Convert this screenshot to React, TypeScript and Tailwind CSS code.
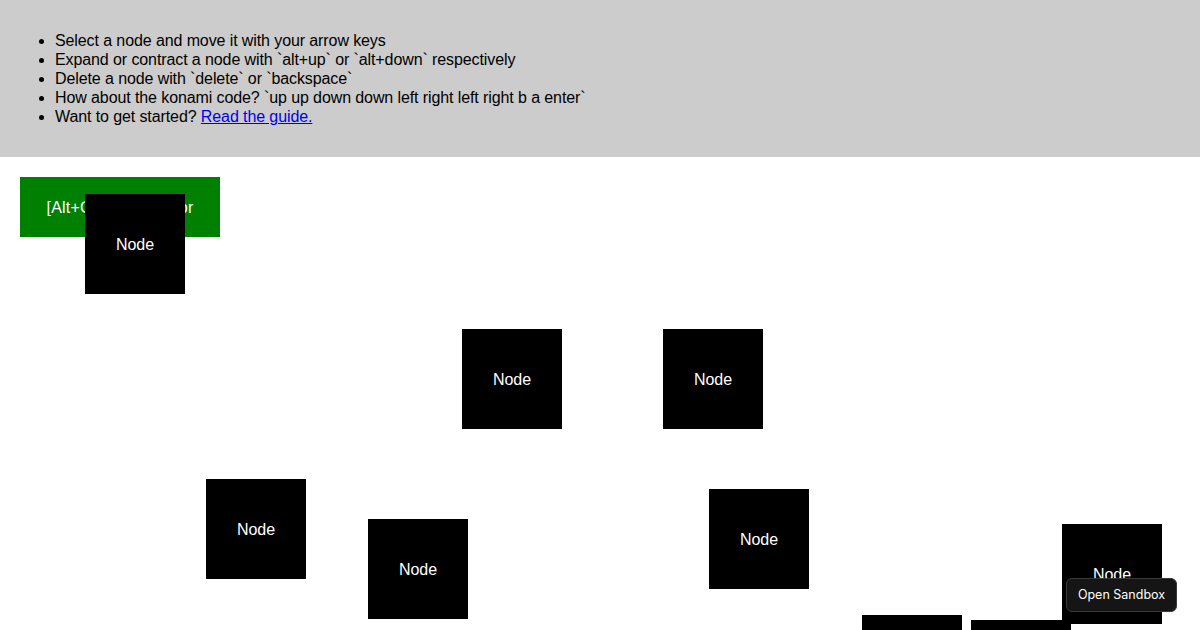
const nodes = [
  { x: 85, y: 194 },
  { x: 462, y: 329 },
  { x: 663, y: 329 },
  { x: 206, y: 479 },
  { x: 368, y: 519 },
  { x: 709, y: 489 },
  { x: 1062, y: 524 },
  { x: 862, y: 615 },
  { x: 971, y: 620 },
]

export default function App() {
  return (
    <div
      className="relative h-[630px] w-[1200px] overflow-hidden bg-white text-black"
      style={{ fontFamily: '"Liberation Sans", Arial, sans-serif' }}
    >
      <header className="bg-[#cccccc] p-[15px]">
        <ul className="my-4 list-disc pl-10 text-base leading-[19px] tracking-[-0.1px]">
          <li>Select a node and move it with your arrow keys</li>
          <li>Expand or contract a node with `alt+up` or `alt+down` respectively</li>
          <li>Delete a node with `delete` or `backspace`</li>
          <li>How about the konami code? `up up down down left right left right b a enter`</li>
          <li>
            Want to get started?{' '}
            <a href="#" className="text-[#0000ee] underline">
              Read the guide.
            </a>
          </li>
        </ul>
      </header>

      <button className="ml-5 mt-5 flex h-[60px] w-[200px] items-center justify-center bg-[#008000] pt-[2px] text-base tracking-[0.2px] text-white">
        [Alt+Click] Create or
      </button>

      {nodes.map((n, i) => (
        <div
          key={i}
          className="absolute flex h-[100px] w-[100px] items-center justify-center bg-black pt-[2px] text-base text-white"
          style={{ left: n.x, top: n.y }}
        >
          Node
        </div>
      ))}

      <button
        className="absolute bottom-[18px] right-[23px] flex h-[34px] w-[111px] items-center justify-center rounded-md border border-[#3a3a3a] bg-[#151515] text-[12.5px] text-white"
        style={{ fontFamily: 'Inter, "Liberation Sans", sans-serif' }}
      >
        Open Sandbox
      </button>
    </div>
  )
}
